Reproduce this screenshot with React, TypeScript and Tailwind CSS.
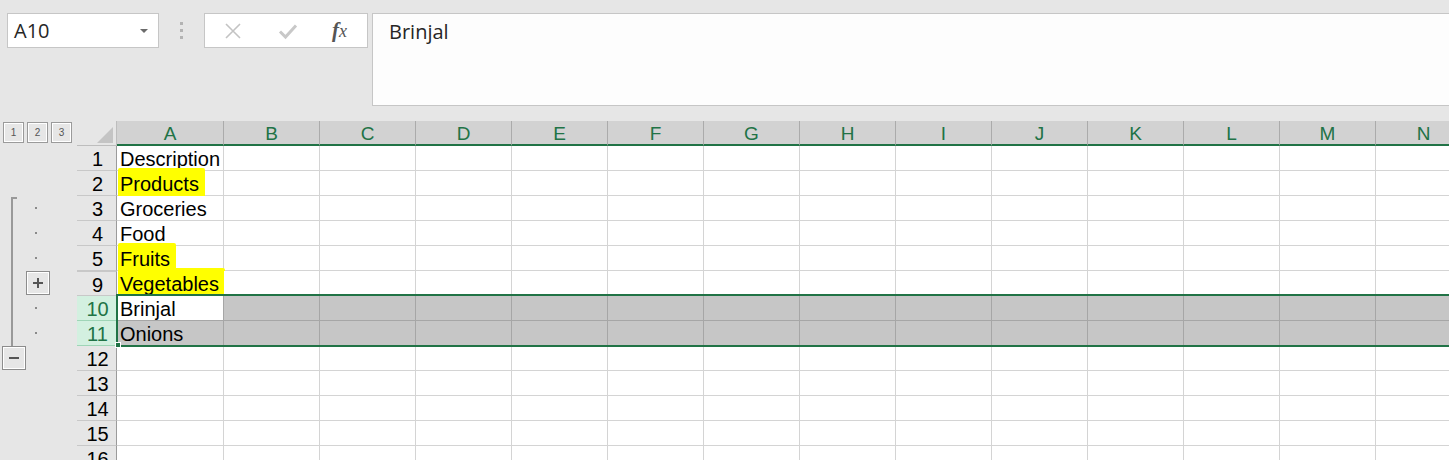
import React from 'react';

const COLS = ['B', 'C', 'D', 'E', 'F', 'G', 'H', 'I', 'J', 'K', 'L', 'M', 'N'];

type Row = { n: string; a?: string; hl?: boolean; sel?: boolean; active?: boolean; dot?: boolean; plus?: boolean; minus?: boolean; hiddenBelow?: boolean; hiddenAbove?: boolean };

const ROWS: Row[] = [
  { n: '1', a: 'Description' },
  { n: '2', a: 'Products', hl: true },
  { n: '3', a: 'Groceries', dot: true },
  { n: '4', a: 'Food', dot: true },
  { n: '5', a: 'Fruits', hl: true, dot: true, hiddenBelow: true },
  { n: '9', a: 'Vegetables', hl: true, plus: true, hiddenAbove: true },
  { n: '10', a: 'Brinjal', sel: true, active: true, dot: true },
  { n: '11', a: 'Onions', sel: true, dot: true },
  { n: '12', minus: true },
  { n: '13' },
  { n: '14' },
  { n: '15' },
  { n: '16' },
];

const cellFont = { fontFamily: '"Liberation Sans", Arial, sans-serif' };
const uiFont = { fontFamily: '"Open Sans", "Noto Sans", sans-serif' };

function OutlineBtn({ children }: { children: React.ReactNode }) {
  return (
    <div className="w-[24px] h-[24px] border border-[#8c8c8c] flex">
      <div className="flex-1 border border-white flex items-center justify-center">{children}</div>
    </div>
  );
}

export default function App() {
  return (
    <div className="w-[1449px] h-[460px] bg-[#e6e6e6] overflow-hidden" style={cellFont}>
      {/* Formula bar area */}
      <div className="flex items-start pt-[13px] h-[121px]" style={uiFont}>
        <div className="ml-[7px] w-[152px] h-[35px] bg-white border border-[#c6c6c6] flex items-center justify-between pl-[6px] pr-[10px]">
          <span className="text-[20px] text-[#262626] leading-none">A10</span>
          <svg width="8" height="4" viewBox="0 0 8 4">
            <path d="M0 0h8L4 4z" fill="#6b6b6b" />
          </svg>
        </div>
        <div className="w-[45px] h-[35px] flex flex-col items-center justify-center gap-[4px]">
          <div className="w-[3px] h-[3px] bg-[#b3b3b3]" />
          <div className="w-[3px] h-[3px] bg-[#b3b3b3]" />
          <div className="w-[3px] h-[3px] bg-[#b3b3b3]" />
        </div>
        <div className="w-[164px] h-[35px] bg-white border border-[#c6c6c6] flex items-center">
          <svg className="ml-[19px]" width="18" height="18" viewBox="0 0 18 18">
            <path d="M2 2L16 16M16 2L2 16" stroke="#c3c3c3" strokeWidth="1.6" fill="none" />
          </svg>
          <svg className="ml-[36px]" width="20" height="18" viewBox="0 0 20 18">
            <path d="M2 9.5L7.5 15L18 3.5" stroke="#c8c8c8" strokeWidth="3" fill="none" />
          </svg>
          <span
            className="ml-[34px] text-[21px] text-[#555] italic leading-none"
            style={{ fontFamily: '"Liberation Serif", "Times New Roman", serif' }}
          >
            <span className="font-bold">f</span>
            <span className="text-[18px]">x</span>
          </span>
        </div>
        <div className="ml-[4px] flex-1 h-[93px] bg-[#fdfdfd] border border-[#c6c6c6] border-r-0 pl-[16px] pt-[3px]">
          <span className="text-[20px] text-[#262626]">Brinjal</span>
        </div>
      </div>

      {/* Sheet */}
      <div className="flex">
        {/* Outline pane */}
        <div className="w-[77px] shrink-0">
          <div className="h-[25px] flex items-start pt-[1px] pl-[3px] gap-[3px]">
            {['1', '2', '3'].map((t) => (
              <div key={t} className="w-[21px] h-[21px] border border-[#9a9a9a] flex">
                <div className="flex-1 border border-white flex items-center justify-center text-[10px] text-[#555]">{t}</div>
              </div>
            ))}
          </div>
          <div className="relative">
            <div className="absolute left-[11px] top-[51px] w-[2px] h-[149px] bg-[#999]" />
            <div className="absolute left-[11px] top-[51px] w-[6px] h-[2px] bg-[#999]" />
            {ROWS.map((r) => (
              <div key={r.n} className="h-[25px] relative">
                {r.dot && <div className="absolute left-[35px] top-[11px] w-[2px] h-[2px] bg-[#8a8a8a]" />}
                {r.plus && (
                  <div className="absolute left-[26px] top-0">
                    <OutlineBtn>
                      <svg width="10" height="10" viewBox="0 0 10 10">
                        <path d="M0 5h10M5 0v10" stroke="#555" strokeWidth="2" />
                      </svg>
                    </OutlineBtn>
                  </div>
                )}
                {r.minus && (
                  <div className="absolute left-[2px] top-0">
                    <OutlineBtn>
                      <svg width="10" height="10" viewBox="0 0 10 10">
                        <path d="M0 5h10" stroke="#555" strokeWidth="2" />
                      </svg>
                    </OutlineBtn>
                  </div>
                )}
              </div>
            ))}
          </div>
        </div>

        {/* Grid */}
        <div className="relative flex-1 overflow-hidden">
          {/* header */}
          <div className="flex h-[25px]">
            <div className="w-[40px] shrink-0 h-[25px] border-b border-r border-[#bdbdbd] bg-[#e6e6e6] flex items-end justify-end pr-[3px] pb-[2px]">
              <svg width="16" height="16" viewBox="0 0 16 16">
                <path d="M16 0V16H0z" fill="#c4c4c4" />
              </svg>
            </div>
            <div className="w-[107px] shrink-0 h-[25px] bg-[#d2d2d2] border-r border-[#ababab] border-b-2 border-b-[#217346] flex items-center justify-center pt-[3px] text-[19px] text-[#217346]">
              A
            </div>
            {COLS.map((c) => (
              <div
                key={c}
                className="w-[96px] shrink-0 h-[25px] bg-[#d2d2d2] border-r border-[#ababab] border-b-2 border-b-[#217346] flex items-center justify-center pt-[3px] text-[19px] text-[#217346]"
              >
                {c}
              </div>
            ))}
          </div>
          {/* rows */}
          {ROWS.map((r) => (
            <div key={r.n} className="flex h-[25px]">
              <div
                className={
                  'w-[40px] shrink-0 h-[25px] border-r flex items-center justify-center pl-[2px] pt-[2px] text-[20px] ' +
                  (r.sel
                    ? 'bg-[#d3f0e0] text-[#217346] border-r-[#217346] border-b border-b-[#9fd5b7]'
                    : 'bg-[#e6e6e6] text-black border-r-[#9b9b9b] border-b border-b-[#c8c8c8]') +
                  (r.hiddenBelow ? ' border-b-[#9b9b9b]' : '') +
                  (r.hiddenAbove ? ' border-t border-t-[#c8c8c8]' : '')
                }
              >
                {r.n}
              </div>
              <div
                className={
                  'w-[107px] shrink-0 h-[25px] border-r border-b flex items-center pl-[3px] pt-[2px] text-[20px] text-black ' +
                  (r.sel
                    ? r.active
                      ? 'bg-white border-[#a6a6a6]'
                      : 'bg-[#c6c6c6] border-[#a6a6a6]'
                    : 'bg-white border-[#d4d4d4]')
                }
              >
                {r.a && (
                  <span className={r.hl ? 'bg-[#ffff00] pl-[2px] pr-[6px] -ml-[2px] pt-[1px] pb-[2px] rounded-[2px]' : ''}>{r.a}</span>
                )}
              </div>
              {COLS.map((c) => (
                <div
                  key={c}
                  className={
                    'w-[96px] shrink-0 h-[25px] border-r border-b ' +
                    (r.sel ? 'bg-[#c6c6c6] border-[#a6a6a6]' : 'bg-white border-[#d4d4d4]')
                  }
                />
              ))}
            </div>
          ))}
          {/* selection outline */}
          <div className="absolute left-[39px] right-0 top-[173px] h-[53px] border-2 border-r-0 border-[#217346] pointer-events-none" />
          <div className="absolute left-[38px] top-[221px] w-[6px] h-[6px] bg-[#217346] border border-white" />
        </div>
      </div>
    </div>
  );
}
